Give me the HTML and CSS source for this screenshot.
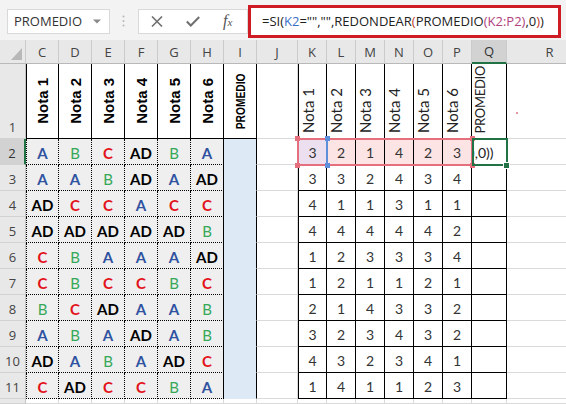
FILE: index.html
```html
<!DOCTYPE html>
<html>
<head>
<meta charset="utf-8">
<link rel="stylesheet" href="styles.css">
</head>
<body>
<div class="toolbar">
  <div class="namebox"><span>PROMEDIO</span><svg width="8" height="5" viewBox="0 0 8 5"><path d="M0 0.5h8L4 4.5z" fill="#8a8a8a"/></svg></div>
  <svg class="grip" width="3" height="12" viewBox="0 0 3 12"><circle cx="1.5" cy="1.5" r="1" fill="#b5b5b5"/><circle cx="1.5" cy="6" r="1" fill="#b5b5b5"/><circle cx="1.5" cy="10.5" r="1" fill="#b5b5b5"/></svg>
  <div class="fxbox">
    <svg class="ic-x" width="12" height="11" viewBox="0 0 12 11"><path d="M1 0.5L11 10.5M11 0.5L1 10.5" stroke="#707070" stroke-width="1.6" fill="none"/></svg>
    <svg class="ic-ok" width="14" height="11" viewBox="0 0 14 11"><path d="M0.8 5.5L4.8 9.5L13.2 1" stroke="#707070" stroke-width="2" fill="none"/></svg>
    <span class="fx">f<small>x</small></span>
  </div>
  <div class="formula"><span>=SI(<b class="fb">K2</b>="","",REDONDEAR<b class="fr">(</b>PROMEDIO<b class="fp">(K2:P2)</b>,0<b class="fr">)</b>)</span></div>
</div>

<div class="sheet">
  <div class="r hdr">
    <div class="corner"><svg width="11" height="12" viewBox="0 0 11 12"><path d="M11 0V12H0z" fill="#b8b8b8"/></svg></div>
    <div>C</div><div>D</div><div>E</div><div>F</div><div>G</div><div>H</div><div>I</div><div>J</div>
    <div>K</div><div>L</div><div>M</div><div>N</div><div>O</div><div>P</div><div class="qh">Q</div><div>R</div>
  </div>

  <div class="r r1">
    <div class="rh">1</div>
    <div class="t tl"><span>Nota 1</span></div><div class="t"><span>Nota 2</span></div><div class="t"><span>Nota 3</span></div><div class="t"><span>Nota 4</span></div><div class="t"><span>Nota 5</span></div><div class="t"><span>Nota 6</span></div><div class="t"><span class="pm">PROMEDIO</span></div>
    <div></div>
    <div class="k kl"><span>Nota 1</span></div><div class="k"><span>Nota 2</span></div><div class="k"><span>Nota 3</span></div><div class="k"><span>Nota 4</span></div><div class="k"><span>Nota 5</span></div><div class="k"><span>Nota 6</span></div><div class="k"><span class="kp">PROMEDIO</span></div>
    <div></div>
  </div>

  <div class="r">
    <div class="rh rh-on">2</div>
    <div class="x x1 xa">A</div><div class="x xb">B</div><div class="x xc">C</div><div class="x xd">AD</div><div class="x xb">B</div><div class="x x6 xa">A</div><div class="p"></div><div></div>
    <div class="n nl hk">3</div><div class="n hr">2</div><div class="n hr">1</div><div class="n hr">4</div><div class="n hr">2</div><div class="n hr">3</div><div class="n q2"><span>),0))</span></div><div></div>
  </div>
  <div class="r">
    <div class="rh">3</div>
    <div class="x x1 xa">A</div><div class="x xa">A</div><div class="x xb">B</div><div class="x xd">AD</div><div class="x xa">A</div><div class="x x6 xd">AD</div><div class="p"></div><div></div>
    <div class="n nl">3</div><div class="n">3</div><div class="n">2</div><div class="n">4</div><div class="n">3</div><div class="n">4</div><div class="n"></div><div></div>
  </div>
  <div class="r">
    <div class="rh">4</div>
    <div class="x x1 xd">AD</div><div class="x xc">C</div><div class="x xc">C</div><div class="x xa">A</div><div class="x xc">C</div><div class="x x6 xc">C</div><div class="p"></div><div></div>
    <div class="n nl">4</div><div class="n">1</div><div class="n">1</div><div class="n">3</div><div class="n">1</div><div class="n">1</div><div class="n"></div><div></div>
  </div>
  <div class="r">
    <div class="rh">5</div>
    <div class="x x1 xd">AD</div><div class="x xd">AD</div><div class="x xd">AD</div><div class="x xd">AD</div><div class="x xd">AD</div><div class="x x6 xb">B</div><div class="p"></div><div></div>
    <div class="n nl">4</div><div class="n">4</div><div class="n">4</div><div class="n">4</div><div class="n">4</div><div class="n">2</div><div class="n"></div><div></div>
  </div>
  <div class="r">
    <div class="rh">6</div>
    <div class="x x1 xc">C</div><div class="x xb">B</div><div class="x xa">A</div><div class="x xa">A</div><div class="x xa">A</div><div class="x x6 xd">AD</div><div class="p"></div><div></div>
    <div class="n nl">1</div><div class="n">2</div><div class="n">3</div><div class="n">3</div><div class="n">3</div><div class="n">4</div><div class="n"></div><div></div>
  </div>
  <div class="r">
    <div class="rh">7</div>
    <div class="x x1 xc">C</div><div class="x xb">B</div><div class="x xc">C</div><div class="x xc">C</div><div class="x xb">B</div><div class="x x6 xc">C</div><div class="p"></div><div></div>
    <div class="n nl">1</div><div class="n">2</div><div class="n">1</div><div class="n">1</div><div class="n">2</div><div class="n">1</div><div class="n"></div><div></div>
  </div>
  <div class="r">
    <div class="rh">8</div>
    <div class="x x1 xb">B</div><div class="x xc">C</div><div class="x xd">AD</div><div class="x xa">A</div><div class="x xa">A</div><div class="x x6 xb">B</div><div class="p"></div><div></div>
    <div class="n nl">2</div><div class="n">1</div><div class="n">4</div><div class="n">3</div><div class="n">3</div><div class="n">2</div><div class="n"></div><div></div>
  </div>
  <div class="r">
    <div class="rh">9</div>
    <div class="x x1 xa">A</div><div class="x xb">B</div><div class="x xa">A</div><div class="x xd">AD</div><div class="x xa">A</div><div class="x x6 xb">B</div><div class="p"></div><div></div>
    <div class="n nl">3</div><div class="n">2</div><div class="n">3</div><div class="n">4</div><div class="n">3</div><div class="n">2</div><div class="n"></div><div></div>
  </div>
  <div class="r">
    <div class="rh">10</div>
    <div class="x x1 xd">AD</div><div class="x xa">A</div><div class="x xb">B</div><div class="x xa">A</div><div class="x xd">AD</div><div class="x x6 xc">C</div><div class="p"></div><div></div>
    <div class="n nl">4</div><div class="n">3</div><div class="n">2</div><div class="n">3</div><div class="n">4</div><div class="n">1</div><div class="n"></div><div></div>
  </div>
  <div class="r">
    <div class="rh">11</div>
    <div class="x x1 xc">C</div><div class="x xd">AD</div><div class="x xc">C</div><div class="x xc">C</div><div class="x xb">B</div><div class="x x6 xa">A</div><div class="p"></div><div></div>
    <div class="n nl">1</div><div class="n">4</div><div class="n">1</div><div class="n">1</div><div class="n">2</div><div class="n">3</div><div class="n"></div><div></div>
  </div>
  <div class="r r12">
    <div class="rh"></div>
    <div></div><div></div><div></div><div></div><div></div><div></div><div></div><div></div>
    <div></div><div></div><div></div><div></div><div></div><div></div><div></div><div></div>
  </div>

  <div class="range"></div>
  <div class="range-k"></div>
  <div class="sq sq-r sq-tl"></div><div class="sq sq-r sq-bl"></div>
  <div class="sq sq-r sq-tr"></div><div class="sq sq-r sq-br"></div>
  <div class="sq sq-b sq-kt"></div><div class="sq sq-b sq-kb"></div>
  <div class="active"></div>
  <div class="handle"></div>
  <div class="dot"></div>
</div>
</body>
</html>
```

FILE: styles.css
```css
html, body {
  margin: 0;
  padding: 0;
}
body {
  width: 566px;
  height: 404px;
  overflow: hidden;
  background: #ffffff;
  font-family: "Open Sans", "Noto Sans", sans-serif;
}

/* ---------- formula toolbar ---------- */
.toolbar {
  height: 40px;
  box-sizing: border-box;
  padding: 2px 0 0 7px;
  background: #f3f3f3;
  display: flex;
  align-items: center;
}
.namebox {
  width: 103px;
  height: 25px;
  box-sizing: border-box;
  background: #ffffff;
  border: 1px solid #d9d9d9;
  display: flex;
  align-items: center;
  justify-content: space-between;
  padding: 0 8px 0 6px;
  font-size: 13px;
  color: #333333;
}
.grip {
  margin-left: 12px;
}
.fxbox {
  margin-left: 13px;
  width: 110px;
  height: 25px;
  box-sizing: border-box;
  background: #ffffff;
  border: 1px solid #d9d9d9;
  display: flex;
  align-items: center;
  padding-left: 12px;
}
.ic-ok {
  margin-left: 23px;
}
.fx {
  margin-left: 23px;
  font-family: "Liberation Serif", serif;
  font-style: italic;
  font-size: 16px;
  color: #555555;
  line-height: 1;
}
.fx small {
  font-size: 11px;
}
.formula {
  width: 313px;
  height: 33px;
  box-sizing: border-box;
  border: 3px solid #cf1b24;
  background: #ffffff;
  display: flex;
  align-items: center;
  padding-left: 11px;
  font-size: 13px;
  color: #222222;
  white-space: nowrap;
  overflow: hidden;
}
.formula b {
  font-weight: normal;
}
.fb { color: #3a70c8; }
.fr { color: #c0392b; }
.fp { color: #b0427e; }

/* ---------- sheet grid ---------- */
.sheet {
  position: relative;
}
.r {
  display: grid;
  grid-template-columns: 26px repeat(7, 33px) 41px repeat(6, 29px) 35px 86px;
  height: 26px;
}
.r > div {
  box-sizing: border-box;
  border-right: 1px solid #dadada;
  border-bottom: 1px solid #dadada;
  display: flex;
  align-items: center;
  justify-content: center;
  font-family: "Lato", sans-serif;
  font-size: 15px;
  overflow: hidden;
}
.r12 {
  height: 5px;
}

.hdr {
  height: 24px;
}
.hdr > div {
  background: #e8e8e8;
  border-right: 1px solid #cbcbcb;
  border-bottom: 1px solid #b9b9b9;
  font-family: "Open Sans", sans-serif;
  font-size: 13px;
  color: #444444;
}
.hdr > .corner {
  justify-content: flex-end;
  align-items: flex-end;
  padding: 0 3px 3px 0;
}
.hdr > .qh {
  background: #d2d2d2;
  border-bottom: 2px solid #217346;
  color: #333333;
}

.r > .rh {
  background: #e8e8e8;
  border-right: 1px solid #c4c4c4;
  border-bottom: 1px solid #d2d2d2;
  align-items: flex-end;
  padding-bottom: 2px;
  font-family: "Open Sans", sans-serif;
  font-size: 13px;
  color: #444444;
}
.r > .rh-on {
  background: #d2d2d2;
  border-right: 2px solid #217346;
  color: #333333;
}

.r1 {
  height: 75px;
}
.r1 > .t {
  border-right: 1px solid #000000;
  border-bottom: 1px solid #000000;
  font-family: "Liberation Sans", Arial, sans-serif;
  font-weight: bold;
  font-size: 15px;
  color: #000000;
}
.r1 > .tl {
  border-left: 1px solid #000000;
}
.t span,
.k span {
  writing-mode: vertical-rl;
  transform: rotate(180deg);
  white-space: nowrap;
  line-height: 1;
}
.t .pm {
  font-size: 13px;
  transform: rotate(180deg) scaleY(0.79);
}
.r1 > .k {
  border-right: 1px solid #000000;
  border-bottom: 1px solid #000000;
  align-items: flex-end;
  justify-content: flex-start;
  padding: 0 0 5px 2px;
  font-size: 15px;
  color: #222222;
}
.r1 > .kl {
  border-left: 1px solid #000000;
}
.k .kp {
  font-size: 13px;
  letter-spacing: -0.3px;
}

/* letter grades */
.r > .x {
  background: #efefef;
  border-right: 1px dotted #000000;
  border-bottom: 1px dotted #000000;
  font-weight: bold;
  font-size: 15px;
  padding-top: 2px;
}
.r > .x1 {
  border-left: 1px dotted #000000;
}
.r > .x6 {
  border-right: 1px solid #000000;
}
.xa { color: #2f53a1; }
.xb { color: #35a857; font-weight: normal !important; }
.xc { color: #e3121b; }
.xd { color: #000000; }

.r > .p {
  background: #dde9f5;
  border-right: 1px solid #000000;
  border-bottom: 1px solid #dde9f5;
}

/* numeric grades */
.r > .n {
  border-right: 1px solid #000000;
  border-bottom: 1px solid #000000;
  font-size: 14px;
  color: #333333;
  padding-top: 2px;
}
.r > .nl {
  border-left: 1px solid #000000;
}
.r > .hk {
  background: #ebdff0;
}
.r > .hr {
  background: #fde4e4;
}
.r > .q2 {
  justify-content: flex-start;
}
.q2 span {
  margin-left: -1px;
  color: #222222;
  white-space: nowrap;
}

/* ---------- overlays (formula range, active cell) ---------- */
.range {
  position: absolute;
  left: 297px;
  top: 98px;
  width: 176px;
  height: 28px;
  box-sizing: border-box;
  border: 2px solid #e4707e;
}
.range-k {
  position: absolute;
  left: 326px;
  top: 98px;
  width: 2px;
  height: 28px;
  background: #5d8fdb;
}
.sq {
  position: absolute;
  width: 5px;
  height: 5px;
}
.sq-r { background: #e4707e; }
.sq-b { background: #5d8fdb; }
.sq-tl { left: 295px; top: 96px; }
.sq-bl { left: 295px; top: 123px; }
.sq-tr { left: 470px; top: 96px; }
.sq-br { left: 470px; top: 123px; }
.sq-kt { left: 325px; top: 96px; }
.sq-kb { left: 325px; top: 123px; }
.active {
  position: absolute;
  left: 472px;
  top: 98px;
  width: 36px;
  height: 28px;
  box-sizing: border-box;
  border: 2px solid #217346;
}
.handle {
  position: absolute;
  left: 504px;
  top: 123px;
  width: 5px;
  height: 5px;
  background: #217346;
  box-shadow: 0 0 0 1px #ffffff;
}
.dot {
  position: absolute;
  left: 516px;
  top: 72px;
  width: 2px;
  height: 2px;
  background: #e29aa0;
}
```
